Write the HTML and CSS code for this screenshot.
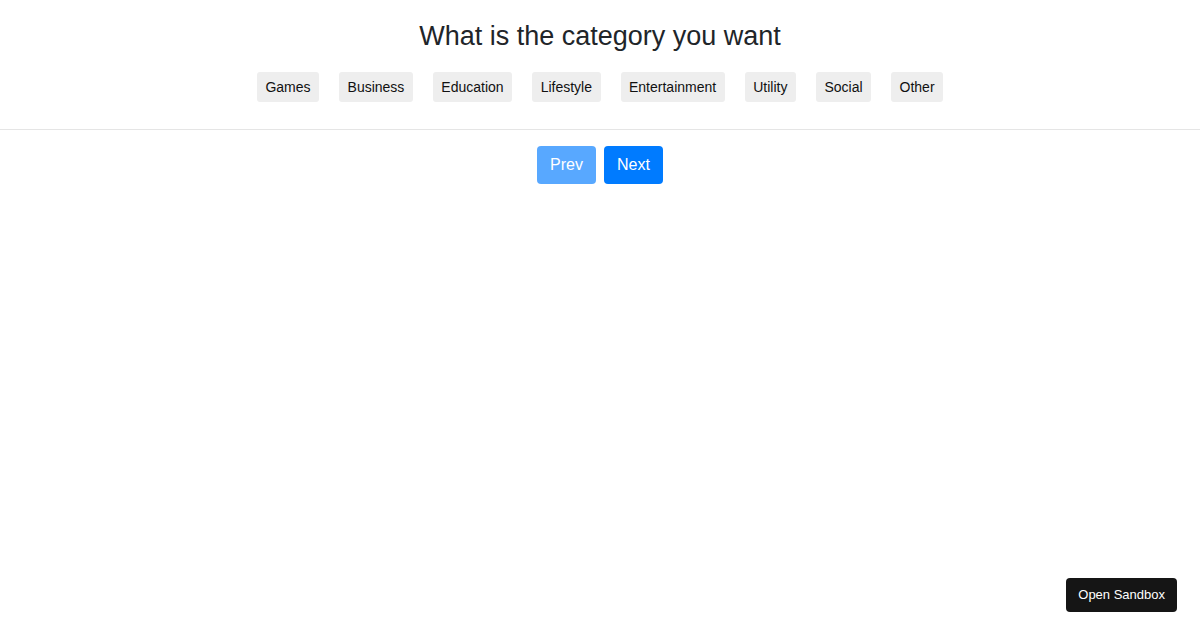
FILE: index.html
```html
<!DOCTYPE html>
<html>
<head>
<meta charset="utf-8">
<link rel="stylesheet" href="styles.css">
</head>
<body>
<div class="header">
  <h2 class="title">What is the category you want</h2>
  <div class="tags">
    <span class="tag">Games</span>
    <span class="tag">Business</span>
    <span class="tag">Education</span>
    <span class="tag">Lifestyle</span>
    <span class="tag">Entertainment</span>
    <span class="tag">Utility</span>
    <span class="tag">Social</span>
    <span class="tag">Other</span>
  </div>
</div>
<div class="nav">
  <button class="btn disabled">Prev</button>
  <button class="btn">Next</button>
</div>
<button class="sandbox">Open Sandbox</button>
</body>
</html>
```
FILE: styles.css
```css
html, body {
  margin: 0;
  padding: 0;
  background: #fff;
  font-family: "Liberation Sans", Arial, sans-serif;
  color: #212529;
}
.header {
  border-bottom: 1px solid #e5e5e5;
  padding: 20px 0 27px;
  text-align: center;
}
.title {
  margin: 0 0 20px;
  font-size: 27px;
  font-weight: 400;
  line-height: 32px;
}
.tags {
  display: flex;
  justify-content: center;
  gap: 20px;
}
.tag {
  background: #eeeeee;
  border-radius: 3px;
  padding: 6px 8.5px;
  font-size: 14px;
  line-height: 18px;
  color: #111;
}
.nav {
  display: flex;
  justify-content: center;
  gap: 8px;
  padding-top: 16px;
}
.btn {
  font-family: "Liberation Sans", Arial, sans-serif;
  font-size: 16px;
  line-height: 24px;
  padding: 7px 13px;
  border: 0;
  border-radius: 4px;
  background: #007bff;
  color: #fff;
}
.btn.disabled {
  opacity: 0.65;
}
.sandbox {
  position: fixed;
  right: 23px;
  bottom: 18px;
  background: #151515;
  color: #fff;
  border: 0;
  border-radius: 4px;
  font-family: "Liberation Sans", Arial, sans-serif;
  font-size: 13px;
  line-height: 16px;
  padding: 9px 12px;
}
```
